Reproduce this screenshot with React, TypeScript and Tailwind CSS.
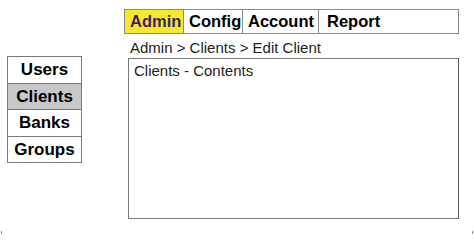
export default function App() {
  const tabs = [
    { label: "Admin", w: "w-[58px]", active: true },
    { label: "Config", w: "w-[59px]" },
    { label: "Account", w: "w-[76px]" },
    { label: "Report", w: "w-[76px]", pl: "pl-[8px]" },
  ];
  const side = ["Users", "Clients", "Banks", "Groups"];

  return (
    <div
      className="w-[474px] h-[234px] bg-white flex flex-col text-black"
      style={{ fontFamily: '"Liberation Sans", Arial, sans-serif' }}
    >
      <div className="flex pt-[9px]">
        {/* sidebar */}
        <div className="ml-[7px] mt-[47px] w-[75px] h-[107px] flex flex-col border border-[#7a7a7a]">
          {side.map((s, i) => (
            <div
              key={s}
              className={
                "flex-1 flex items-center justify-center text-[17px] font-bold leading-none " +
                (i > 0 ? "border-t border-[#7a7a7a] " : "") +
                (s === "Clients" ? "bg-[#c8c8c8]" : "bg-white")
              }
            >
              {s}
            </div>
          ))}
        </div>

        {/* main column */}
        <div className="ml-[42px] flex flex-col">
          <div className="flex h-[25px] border border-[#8a8a8a]">
            {tabs.map((t, i) => (
              <div
                key={t.label}
                className={
                  t.w +
                  " flex items-center text-[16.5px] font-bold leading-none " +
                  (t.pl ?? "pl-[5px]") +
                  (i > 0 ? " border-l border-[#8a8a8a]" : "") +
                  (t.active ? " bg-[#f6e92c] text-[#3a1f72]" : " bg-white")
                }
              >
                {t.label}
              </div>
            ))}
          </div>
          <div className="mt-[5px] pl-[6px] text-[15px] leading-[17px] text-[#222]">
            Admin &gt; Clients &gt; Edit Client
          </div>
          <div className="mt-[2px] ml-[4px] w-[331px] h-[161px] border border-[#7a7a7a] border-r-[#555] pt-[3px] pl-[5px] text-[15px] leading-[17px] text-[#222]">
            Clients - Contents
          </div>
        </div>
      </div>

      {/* corner ticks */}
      <div className="mt-auto flex justify-between px-[1px]">
        <div className="w-[1px] h-[3px] bg-[#888]" />
        <div className="w-[1px] h-[3px] bg-[#888]" />
      </div>
    </div>
  );
}
